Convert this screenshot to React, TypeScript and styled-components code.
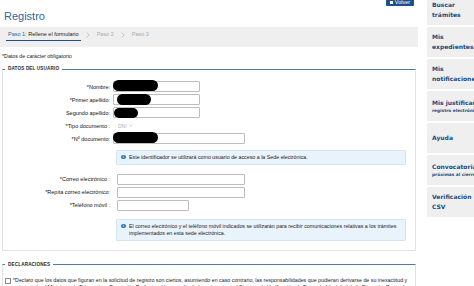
import styled, { createGlobalStyle } from "styled-components";

const GlobalStyle = createGlobalStyle`
  html, body {
    margin: 0;
    padding: 0;
  }
  body {
    width: 474px;
    height: 286px;
    overflow: hidden;
    background: #fff;
    font-family: "Liberation Sans", Arial, sans-serif;
    color: #222;
  }
`;

const SIDE_ITEMS = [
  { title: ["Buscar", "trámites"] },
  { title: ["Mis", "expedientes"] },
  { title: ["Mis", "notificaciones"] },
  { title: ["Mis justificantes"], sub: "registro electrónico" },
  { title: ["Ayuda"] },
  { title: ["Convocatorias"], sub: "próximas al cierre" },
  { title: ["Verificación", "CSV"] },
];

export default function App() {
  return (
    <>
      <GlobalStyle />
      <Page>
        <Main>
          <TopBar>
            <BackButton>
              <svg width="3" height="3" viewBox="0 0 3 3">
                <rect x="0" y="0" width="3" height="3" fill="#fff" />
              </svg>
              Volver
            </BackButton>
          </TopBar>
          <Title>Registro</Title>
          <StepsBar>
            <Step $active>
              <StepNum>Paso 1:</StepNum> Rellene el formulario
            </Step>
            <Chevron />
            <Step>Paso 2</Step>
            <Chevron />
            <Step>Paso 3</Step>
          </StepsBar>
          <Note>*Datos de carácter obligatorio</Note>

          <Fieldset $top={6.5}>
            <Legend>DATOS DEL USUARIO</Legend>
            <Row>
              <Label>*Nombre:</Label>
              <Field $w={87}>
                <Input />
                <Redacted style={{ left: 0, top: -1, width: 45, height: 11 }} />
              </Field>
            </Row>
            <Row>
              <Label>*Primer apellido:</Label>
              <Field $w={87}>
                <Input />
                <Redacted style={{ left: 4, top: 0, width: 34, height: 11 }} />
              </Field>
            </Row>
            <Row>
              <Label>Segundo apellido:</Label>
              <Field $w={87}>
                <Input />
                <Redacted style={{ left: 1, top: 1, width: 24, height: 10 }} />
              </Field>
            </Row>
            <Row>
              <Label>*Tipo documento :</Label>
              <Select>
                DNI
                <svg width="4" height="3" viewBox="0 0 4 3">
                  <path d="M0.4 0.6 L2 2.2 L3.6 0.6" stroke="#b0b0b0" strokeWidth="0.6" fill="none" />
                </svg>
              </Select>
            </Row>
            <Row>
              <Label>*Nº documento:</Label>
              <Field $w={132}>
                <Input />
                <Redacted style={{ left: 0, top: -1, width: 45, height: 10.5 }} />
              </Field>
            </Row>
            <InfoBox $mt={4.5}>
              <InfoIcon>i</InfoIcon>
              <span>Este identificador se utilizará como usuario de acceso a la Sede electrónica.</span>
            </InfoBox>

            <Row $gap={7} $mt={8}>
              <Label>*Correo electrónico :</Label>
              <Field $w={128}>
                <Input />
              </Field>
            </Row>
            <Row $gap={7}>
              <Label>*Repita correo electrónico:</Label>
              <Field $w={128}>
                <Input />
              </Field>
            </Row>
            <Row $gap={7}>
              <Label>*Teléfono móvil :</Label>
              <Field $w={72}>
                <Input />
              </Field>
            </Row>
            <InfoBox $mt={7}>
              <InfoIcon>i</InfoIcon>
              <span>
                El correo electrónico y el teléfono móvil indicados se utilizarán para recibir comunicaciones relativas a los trámites
                <br />
                implementados en esta sede electrónica.
              </span>
            </InfoBox>
          </Fieldset>

          <Fieldset $top={11}>
            <Legend>DECLARACIONES</Legend>
            <CheckRow>
              <CheckBox />
              <span>
                *Declaro que los datos que figuran en la solicitud de registro son ciertos, asumiendo en caso contrario, las responsabilidades que pudieran derivarse de su inexactitud y
                <br />
                autorizando al Ministerio de Educación y Formación Profesional la consulta de los mismos en el Sistema de Verificación de Datos de Identidad de la Dirección General
              </span>
            </CheckRow>
          </Fieldset>
        </Main>

        <Sidebar>
          {SIDE_ITEMS.map((item, i) => (
            <SideItem key={i}>
              {item.title.map((t) => (
                <span key={t}>{t}</span>
              ))}
              {item.sub && <SideSub>{item.sub}</SideSub>}
            </SideItem>
          ))}
        </Sidebar>
      </Page>
    </>
  );
}

function Chevron() {
  return (
    <ChevronSvg width="4" height="6" viewBox="0 0 4 6">
      <path d="M0.6 0.5 L3.2 3 L0.6 5.5" stroke="#a9a9a9" strokeWidth="0.6" fill="none" />
    </ChevronSvg>
  );
}

const Page = styled.div`
  display: flex;
  align-items: flex-start;
`;

const Main = styled.div`
  width: 418px;
  flex-shrink: 0;
`;

const TopBar = styled.div`
  height: 6px;
  display: flex;
  justify-content: flex-end;
  padding-right: 4px;
`;

const BackButton = styled.div`
  margin-top: -6px;
  height: 12px;
  width: 28px;
  box-sizing: border-box;
  background: #1f4f86;
  color: #fff;
  font-size: 5.5px;
  display: flex;
  align-items: flex-end;
  justify-content: center;
  gap: 2px;
  padding-bottom: 1.5px;
  border-radius: 0 0 1px 1px;

  svg {
    margin-bottom: 1px;
  }
`;

const Title = styled.h1`
  margin: 4px 0;
  padding-left: 4px;
  font-size: 11px;
  line-height: 13px;
  font-weight: normal;
  color: #2f65a0;
`;

const StepsBar = styled.div`
  height: 20px;
  box-sizing: border-box;
  background: #efefef;
  padding: 4px 0 0 6px;
  display: flex;
  align-items: flex-start;
  gap: 5px;
`;

const Step = styled.div<{ $active?: boolean }>`
  font-size: 5.5px;
  line-height: 7px;
  padding: 0 2px 2px;
  color: ${(p) => (p.$active ? "#1a1a1a" : "#aaa")};
  border-bottom: 1.5px solid ${(p) => (p.$active ? "#1f4f86" : "transparent")};
`;

const StepNum = styled.span`
  color: #2f65a0;
`;

const ChevronSvg = styled.svg`
  margin-top: 0.5px;
`;

const Note = styled.div`
  margin: 5.5px 0 0 2px;
  font-size: 5.3px;
  line-height: 7px;
  color: #222;
`;

const Fieldset = styled.fieldset<{ $top: number }>`
  margin: ${(p) => p.$top}px 2px 0 2px;
  padding: 8px 0 9px;
  width: 414px;
  box-sizing: border-box;
  min-width: 0;
  border: 1px solid #e2e2e2;
  border-top-color: #55799f;
`;

const Legend = styled.legend`
  margin-left: 2px;
  padding: 0 3px;
  font-size: 4.7px;
  line-height: 6px;
  font-weight: bold;
  color: #2a2a2a;
  letter-spacing: 0.1px;
`;

const Row = styled.div<{ $gap?: number; $mt?: number }>`
  display: grid;
  grid-template-columns: 107px auto;
  column-gap: ${(p) => p.$gap ?? 3}px;
  align-items: center;
  justify-content: start;
  height: 13px;
  margin-top: ${(p) => p.$mt ?? 0}px;
`;

const Label = styled.div`
  text-align: right;
  font-size: 5.5px;
  color: #111;
  white-space: nowrap;
`;

const Field = styled.div<{ $w: number }>`
  position: relative;
  width: ${(p) => p.$w}px;
  height: 11px;
`;

const Input = styled.input`
  display: block;
  width: 100%;
  height: 100%;
  box-sizing: border-box;
  margin: 0;
  padding: 0;
  border: 1px solid #bdbdbd;
  border-radius: 1px;
  background: #fff;
`;

const Redacted = styled.div`
  position: absolute;
  background: #000;
  border-radius: 6px;
`;

const Select = styled.div`
  margin-left: 5px;
  display: flex;
  align-items: center;
  gap: 2.5px;
  font-size: 5px;
  color: #b0b0b0;
`;

const InfoBox = styled.div<{ $mt: number }>`
  margin: ${(p) => p.$mt}px 0 0 113px;
  width: 290px;
  box-sizing: border-box;
  background: #e9f3fc;
  border: 1px solid #d4e5f4;
  border-radius: 1px;
  display: flex;
  align-items: flex-start;
  gap: 3.5px;
  padding: 3px 4px;
  font-size: 5.3px;
  line-height: 7px;
  color: #222;
`;

const InfoIcon = styled.span`
  flex-shrink: 0;
  width: 4.5px;
  height: 4.5px;
  margin-top: 1.25px;
  border-radius: 50%;
  background: #2f72b8;
  color: #fff;
  font-size: 3.5px;
  line-height: 4.5px;
  font-weight: bold;
  text-align: center;
`;

const CheckRow = styled.div`
  display: flex;
  align-items: flex-start;
  gap: 2px;
  padding-left: 2px;
  margin-top: 1px;
  font-size: 5.3px;
  line-height: 7px;
  color: #222;
  white-space: nowrap;
`;

const CheckBox = styled.span`
  flex-shrink: 0;
  width: 4px;
  height: 4px;
  margin-top: 1.5px;
  border: 0.8px solid #8a8a8a;
  border-radius: 0.5px;
  background: #fff;
`;

const Sidebar = styled.div`
  margin: -5px 0 0 9px;
  width: 80px;
  flex-shrink: 0;
  display: flex;
  flex-direction: column;
  gap: 2px;
`;

const SideItem = styled.div`
  height: 30px;
  box-sizing: border-box;
  background: #efefef;
  padding-left: 5px;
  display: flex;
  flex-direction: column;
  justify-content: center;
  color: #1d4c7c;
  font-family: "DejaVu Sans", Verdana, sans-serif;
  font-weight: bold;
  font-size: 6px;
  line-height: 10px;
  white-space: nowrap;
`;

const SideSub = styled.span`
  font-size: 4.3px;
  line-height: 6px;
`;
